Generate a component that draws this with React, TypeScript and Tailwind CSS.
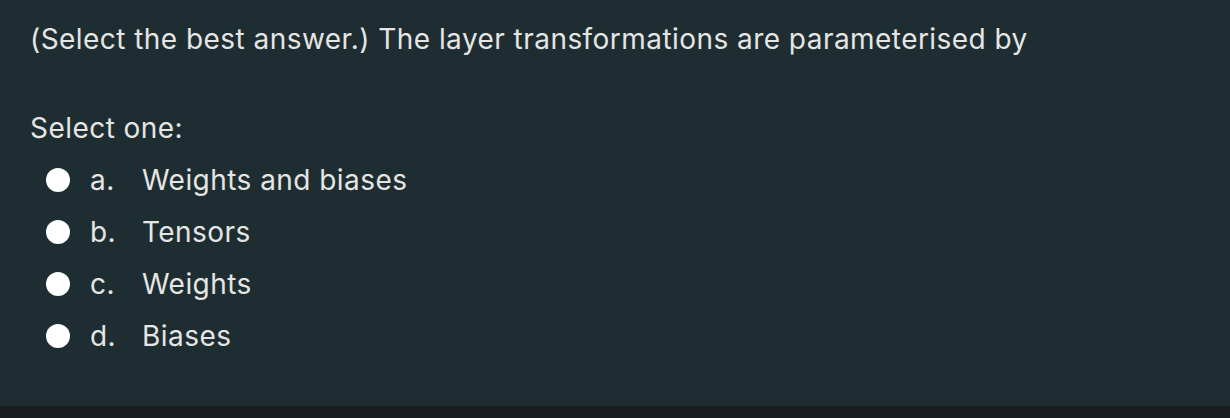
const options = [
  { letter: 'a.', label: 'Weights and biases' },
  { letter: 'b.', label: 'Tensors' },
  { letter: 'c.', label: 'Weights' },
  { letter: 'd.', label: 'Biases' },
];

export default function App() {
  return (
    <div className="w-[1230px] h-[418px] flex flex-col bg-[#1b1c1e] font-['Inter',sans-serif] text-[#e5e5e3] tracking-[0.45px]">
      <div className="h-[406px] bg-[#1e2d32] pl-[30px] pt-[21px]">
        <p className="text-[28px] leading-[36px]">
          (Select the best answer.) The layer transformations are parameterised by
        </p>
        <p className="mt-[53px] text-[28px] leading-[36px]">Select one:</p>
        <div className="mt-[8px] flex flex-col">
          {options.map((o) => (
            <label key={o.letter} className="flex items-center h-[52px] pl-[16px]">
              <span className="w-[24px] h-[24px] rounded-full bg-white" />
              <span className="ml-[20px] w-[52px] text-[28px]">{o.letter}</span>
              <span className="text-[28px]">{o.label}</span>
            </label>
          ))}
        </div>
      </div>
    </div>
  );
}
